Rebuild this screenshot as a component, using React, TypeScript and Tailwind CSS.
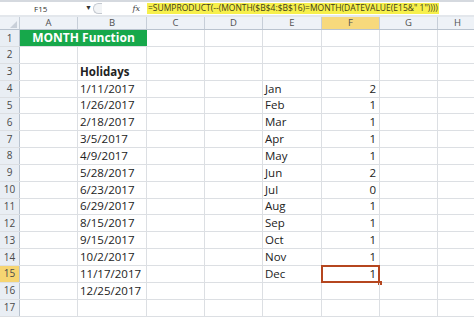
const cols = [
  { key: "A", w: 58 },
  { key: "B", w: 69 },
  { key: "C", w: 58 },
  { key: "D", w: 58 },
  { key: "E", w: 59 },
  { key: "F", w: 58 },
  { key: "G", w: 58 },
  { key: "H", w: 40 },
];

const dates = [
  "1/11/2017", "1/26/2017", "2/18/2017", "3/5/2017", "4/9/2017", "5/28/2017", "6/23/2017",
  "6/29/2017", "8/15/2017", "9/15/2017", "10/2/2017", "11/17/2017", "12/25/2017",
];
const months = ["Jan", "Feb", "Mar", "Apr", "May", "Jun", "Jul", "Aug", "Sep", "Oct", "Nov", "Dec"];
const counts = [2, 1, 1, 1, 1, 2, 0, 1, 1, 1, 1, 1];

function cellText(row: number, col: string): string {
  if (row === 3 && col === "B") return "Holidays";
  if (row >= 4 && row <= 16 && col === "B") return dates[row - 4];
  if (row >= 4 && row <= 15 && col === "E") return months[row - 4];
  if (row >= 4 && row <= 15 && col === "F") return String(counts[row - 4]);
  return "";
}

function Row({ n }: { n: number }) {
  const active = n === 15;
  return (
    <div className="flex h-[16.85px] border-b border-[#dcdfe3]">
      <div
        className={
          "flex w-[20px] shrink-0 items-center justify-center border-r border-[#b9c3cf] text-[10px] text-[#4a4a4a] " +
          (active ? "bg-[#f6d572]" : "bg-[#e9eef4]")
        }
      >
        {n}
      </div>
      {cols.map((c) => {
        const t = cellText(n, c.key);
        const sel = n === 15 && c.key === "F";
        return (
          <div
            key={c.key}
            style={{ width: c.w }}
            className={
              "relative flex shrink-0 items-end border-r border-[#dcdfe3] pb-[1px] text-[11.5px] leading-[14px] text-[#222] " +
              (c.key === "F" ? "justify-end pr-[3px] " : "pl-[2px] ") +
              (n === 3 ? "font-bold" : "")
            }
          >
            {t}
            {sel && (
              <>
                <div className="absolute -left-[1px] -top-[1px] -bottom-[1px] -right-[1px] border-2 border-[#b5461f]" />
                <div className="absolute -bottom-[3px] -right-[3px] h-[4px] w-[4px] bg-[#b5461f]" />
              </>
            )}
          </div>
        );
      })}
    </div>
  );
}

export default function App() {
  const rows = Array.from({ length: 16 }, (_, i) => i + 2);
  return (
    <div className="h-[317px] w-[474px] overflow-hidden bg-white font-['Open_Sans',sans-serif]">
      <div className="h-[2px] bg-[#d5d9df]" />
      <div className="flex h-[13px] items-center bg-white">
        <div className="relative flex h-full w-[93px] items-center">
          <span className="absolute left-[34px] text-[8px] text-[#333]">F15</span>
          <span className="absolute left-[85px] text-[7px] text-[#333]">▼</span>
        </div>
        <div className="h-[11px] w-[9px] rounded-l-full border border-r-0 border-[#c4c9d0] bg-[#f2f4f6]" />
        <div className="w-[38px] text-right font-['DejaVu_Serif',serif] text-[8px] italic text-[#444]">fx</div>
        <div className="ml-[7px] flex h-[11px] items-center bg-[#f7f04c] px-[1px] text-[8.5px] tracking-[0px] text-[#3d3d18]">
          =SUMPRODUCT(--(MONTH($B$4:$B$16)=MONTH(DATEVALUE(E15&amp;" 1"))))
        </div>
      </div>
      <div className="h-[2px] bg-[#e3e7ec]" />
      <div className="flex h-[13px] border-b border-[#b9c3cf] bg-[#eef2f7]">
        <div className="relative w-[20px] shrink-0 border-r border-[#c6ced8]">
          <div className="absolute bottom-[1px] right-[2px] h-0 w-0 border-b-[7px] border-l-[7px] border-b-[#c9d0d9] border-l-transparent" />
        </div>
        {cols.map((c) => (
          <div
            key={c.key}
            style={{ width: c.w }}
            className={
              "flex shrink-0 items-center justify-center border-r border-[#c6ced8] text-[9.5px] text-[#505050] " +
              (c.key === "F" ? "bg-[#f7d97c]" : "")
            }
          >
            {c.key}
          </div>
        ))}
      </div>
      <div className="flex h-[17px] border-b border-[#dcdfe3]">
        <div className="flex w-[20px] shrink-0 items-center justify-center border-r border-[#b9c3cf] bg-[#e9eef4] text-[10px] text-[#4a4a4a]">
          1
        </div>
        <div className="flex w-[127px] shrink-0 items-center justify-center bg-[#17a84b] text-[12px] font-bold text-white">
          MONTH Function
        </div>
        {cols.slice(2).map((c) => (
          <div key={c.key} style={{ width: c.w }} className="shrink-0 border-r border-[#dcdfe3]" />
        ))}
      </div>
      {rows.map((n) => (
        <Row key={n} n={n} />
      ))}
    </div>
  );
}
